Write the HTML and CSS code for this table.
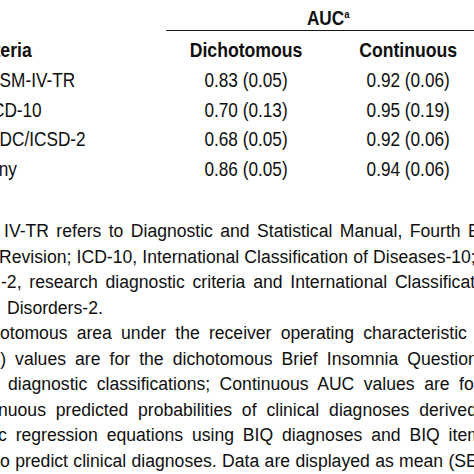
FILE: index.html
```html
<!DOCTYPE html>
<html>
<head>
<meta charset="utf-8">
<link rel="stylesheet" href="styles.css">
</head>
<body>
<div class="page">
  <div class="tbl">
    <div class="c0"></div>
    <div class="auc">AUC<sup>a</sup></div>
    <div class="lab hd">Criteria</div>
    <div class="num hd">Dichotomous</div>
    <div class="num hd">Continuous</div>
    <div class="lab">DSM-IV-TR</div>
    <div class="num">0.83 (0.05)</div>
    <div class="num">0.92 (0.06)</div>
    <div class="lab">ICD-10</div>
    <div class="num">0.70 (0.13)</div>
    <div class="num">0.95 (0.19)</div>
    <div class="lab">RDC/ICSD-2</div>
    <div class="num">0.68 (0.05)</div>
    <div class="num">0.92 (0.06)</div>
    <div class="lab">Any</div>
    <div class="num">0.86 (0.05)</div>
    <div class="num">0.94 (0.06)</div>
  </div>
  <div class="notes">
    <div class="ln l1">IV-TR refers to Diagnostic and Statistical Manual, Fourth Edition, Text</div>
    <div class="ln l2">Revision; ICD-10, International Classification of Diseases-10; RDC/ICSD</div>
    <div class="ln l3">-2, research diagnostic criteria and International Classification of Sleep</div>
    <div class="ln l4">Disorders-2.</div>
    <div class="ln l5">otomous area under the receiver operating characteristic curve</div>
    <div class="ln l6">(BIQ) values are for the dichotomous Brief Insomnia Questionnaire</div>
    <div class="ln l7">diagnostic classifications; Continuous AUC values are for the</div>
    <div class="ln l8">nuous predicted probabilities of clinical diagnoses derived from</div>
    <div class="ln l9">c regression equations using BIQ diagnoses and BIQ items</div>
    <div class="ln l10">o predict clinical diagnoses. Data are displayed as mean (SEM).</div>
  </div>
</div>
</body>
</html>
```

FILE: styles.css
```css
html, body {
  margin: 0;
  padding: 0;
  background: #ffffff;
  overflow: hidden;
}
body {
  width: 474px;
  height: 474px;
  color: #0f0f0f;
  font-family: "Liberation Sans", Arial, sans-serif;
}
.page {
  width: 474px;
  height: 474px;
  overflow: hidden;
}
/* table set in a condensed face: Arial-metric text narrowed to 86% */
.tbl {
  display: grid;
  grid-template-columns: 228px 186px 191px;
  width: 605px;
  margin-left: -30px;
  transform: scaleX(0.86);
  transform-origin: 0 0;
  font-size: 20px;
}
.auc {
  grid-column: 2 / 4;
  text-align: center;
  font-weight: bold;
  padding-top: 6px;
  height: 24px;
  line-height: 24px;
  border-bottom: 1.5px solid #1a1a1a;
}
.auc sup {
  font-size: 11px;
  vertical-align: 7px;
  line-height: 0;
}
.lab, .num {
  line-height: 29.5px;
  white-space: nowrap;
}
.lab {
  padding-left: 20px;
}
.num {
  text-align: center;
}
.hd {
  font-weight: bold;
  font-size: 20.5px;
  line-height: 28px;
  padding-top: 5px;
  padding-bottom: 2px;
}
.lab.hd {
  padding-left: 0;
}
.notes {
  margin-top: 35px;
  font-size: 17.6px;
  line-height: 25.5px;
}
.ln {
  white-space: nowrap;
}
.l1 { margin-left: 4px; word-spacing: 2.5px; }
.l2 { margin-left: -1px; word-spacing: 0.3px; }
.l3 { margin-left: 1px; word-spacing: 2.9px; }
.l4 { margin-left: 7px; }
.l5 { margin-left: 0; word-spacing: 4.3px; }
.l6 { margin-left: -36px; word-spacing: 4.2px; }
.l7 { margin-left: 8px; word-spacing: 4.6px; }
.l8 { margin-left: -2px; word-spacing: 5px; }
.l9 { margin-left: -2px; word-spacing: 4px; }
.l10 { margin-left: 0; word-spacing: 0.5px; }
```
